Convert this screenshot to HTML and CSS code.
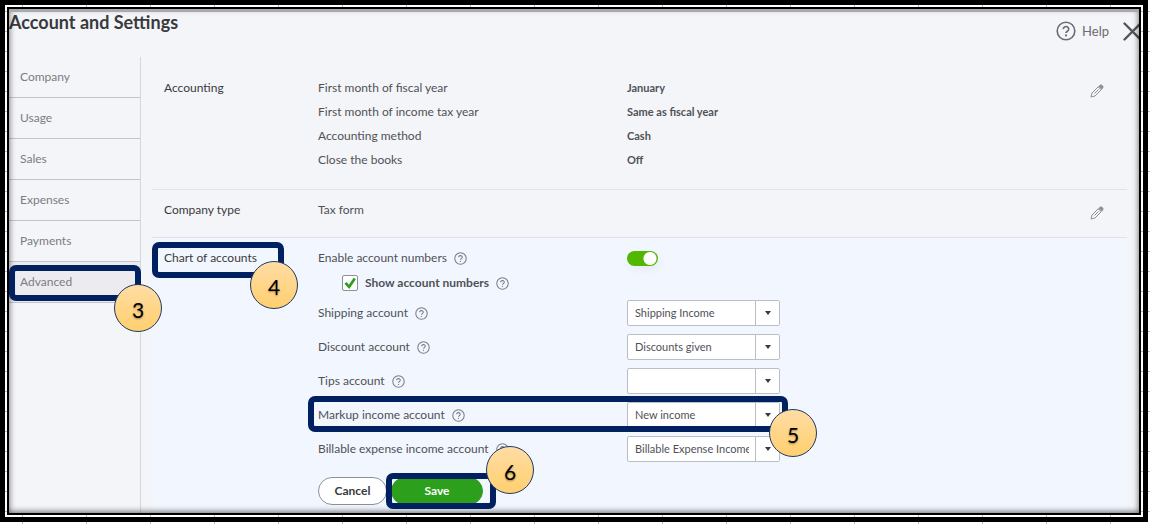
FILE: index.html
```html
<!DOCTYPE html>
<html lang="en">
<head>
<meta charset="utf-8">
<title>Account and Settings</title>
<link rel="stylesheet" href="styles.css">
</head>
<body>
<svg class="defs" aria-hidden="true">
  <symbol id="help" viewBox="0 0 20 20">
    <circle cx="10" cy="10" r="8.8" fill="none" stroke="currentColor" stroke-width="1.6"/>
    <path d="M7.3 8.1a2.7 2.5 0 1 1 4.2 2c-1 .7-1.5 1-1.5 2" fill="none" stroke="currentColor" stroke-width="1.7"/>
    <circle cx="10" cy="14.4" r="1.1" fill="currentColor"/>
  </symbol>
  <symbol id="pencil" viewBox="0 0 14 14">
    <path d="M1 13l1-4 6.2-6.2 3 3L5 12z M4.6 9.4l4-4" fill="none" stroke="currentColor" stroke-width="1" stroke-linejoin="round"/>
    <path d="M8.9 2.4l1.2-1.3a2.2 2.2 0 0 1 2.8 2.8l-1.3 1.2z" fill="currentColor" stroke="currentColor"/>
  </symbol>
</svg>
<div class="frame">
  <div class="window">
    <header class="header">
      <h1 class="title">Account and Settings</h1>
      <div class="tools">
        <button class="help-link" type="button"><svg class="help-icon"><use href="#help"/></svg>Help</button>
        <button class="close" type="button" aria-label="Close"><svg class="close-icon" viewBox="0 0 19 19"><path d="M1.5 1.5l16 16M17.5 1.5l-16 16" stroke="currentColor" stroke-width="2.4" stroke-linecap="round"/></svg></button>
      </div>
    </header>
    <div class="body">
      <nav class="sidebar">
        <a class="tab" href="#company">Company</a>
        <a class="tab" href="#usage">Usage</a>
        <a class="tab" href="#sales">Sales</a>
        <a class="tab" href="#expenses">Expenses</a>
        <a class="tab" href="#payments">Payments</a>
        <a class="tab tab-active" href="#advanced">Advanced<span class="mark mark-tab"><span class="step">3</span></span></a>
      </nav>
      <main class="main">
        <section class="section section-accounting">
          <h2 class="section-title">Accounting</h2>
          <dl class="fields">
            <div class="row"><dt>First month of fiscal year</dt><dd>January</dd></div>
            <div class="row"><dt>First month of income tax year</dt><dd>Same as fiscal year</dd></div>
            <div class="row"><dt>Accounting method</dt><dd>Cash</dd></div>
            <div class="row"><dt>Close the books</dt><dd>Off</dd></div>
          </dl>
          <button class="edit" type="button" aria-label="Edit accounting"><svg class="edit-icon"><use href="#pencil"/></svg></button>
        </section>
        <section class="section">
          <h2 class="section-title">Company type</h2>
          <dl class="fields">
            <div class="row"><dt>Tax form</dt><dd></dd></div>
          </dl>
          <button class="edit" type="button" aria-label="Edit company type"><svg class="edit-icon"><use href="#pencil"/></svg></button>
        </section>
        <section class="section section-chart">
          <h2 class="section-title">Chart of accounts<span class="mark mark-chart"><span class="step">4</span></span></h2>
          <form class="fields">
            <div class="row">
              <span class="name"><label for="enable">Enable account numbers</label><svg class="hint"><use href="#help"/></svg></span>
              <input class="toggle" id="enable" type="checkbox" role="switch" checked>
            </div>
            <div class="row row-check">
              <span class="name"><input class="check" id="show" type="checkbox" checked><label class="strong" for="show">Show account numbers</label><svg class="hint"><use href="#help"/></svg></span>
            </div>
            <div class="row row-select">
              <span class="name"><label for="shipping">Shipping account</label><svg class="hint"><use href="#help"/></svg></span>
              <span class="picker"><select class="select" id="shipping"><option>Shipping Income</option></select></span>
            </div>
            <div class="row row-select">
              <span class="name"><label for="discount">Discount account</label><svg class="hint"><use href="#help"/></svg></span>
              <span class="picker"><select class="select" id="discount"><option>Discounts given</option></select></span>
            </div>
            <div class="row row-select">
              <span class="name"><label for="tips">Tips account</label><svg class="hint"><use href="#help"/></svg></span>
              <span class="picker"><select class="select" id="tips"><option></option></select></span>
            </div>
            <div class="row row-select">
              <span class="name"><label for="markup">Markup income account</label><svg class="hint"><use href="#help"/></svg></span>
              <span class="picker"><select class="select" id="markup"><option>New income</option></select></span>
              <span class="mark mark-row"><span class="step">5</span></span>
            </div>
            <div class="row row-select">
              <span class="name"><label for="billable">Billable expense income account</label><svg class="hint"><use href="#help"/></svg></span>
              <span class="picker"><select class="select" id="billable"><option>Billable Expense Income</option></select></span>
            </div>
            <div class="actions">
              <button class="button" type="button">Cancel</button>
              <div class="save-wrap"><button class="button button-save" type="submit">Save</button><span class="mark mark-save"><span class="step">6</span></span></div>
            </div>
          </form>
        </section>
      </main>
    </div>
  </div>
</div>
</body>
</html>
```
FILE: styles.css
```css
* { box-sizing: border-box; }
body {
  margin: 0;
  font: 12px/24px Lato, "Open Sans", sans-serif;
  color: #505156;
  background:
    repeating-linear-gradient(90deg, transparent 0 22px, #b9b9b9 22px 23px, transparent 23px 64px),
    repeating-linear-gradient(180deg, transparent 0 11px, #b9b9b9 11px 12px, transparent 12px 20px),
    #fff;
}
.defs { position: absolute; width: 0; height: 0; }
button { font: inherit; color: inherit; cursor: pointer; }

.frame {
  margin: 0 2px 2px 0;
  border: 5px solid #000;
  padding: 2px;
}
.window {
  position: relative;
  overflow: hidden;
  border: 2px solid #000;
  background: #f4f5f8;
}
.window::after {
  content: "";
  position: absolute;
  inset: 0;
  pointer-events: none;
  box-shadow: inset 0 3px 0 #a9aaab, inset 0 -1px 6px 0 #000000a0;
}

.header {
  display: flex;
  justify-content: space-between;
  height: 48px;
}
.title { margin: 0; font-size: 18px; line-height: 26px; color: #393a3d; }
.tools { display: flex; align-items: center; gap: 14px; height: 44px; margin-right: -3px; }
.help-link {
  display: flex;
  align-items: center;
  gap: 6px;
  padding: 0;
  border: 0;
  background: none;
  color: #6b6c72;
  font-size: 13px;
}
.help-icon { width: 20px; height: 20px; }
.close { display: flex; padding: 0; border: 0; background: none; color: #55565b; }
.close-icon { width: 19px; height: 19px; }

.body { display: flex; gap: 11px; padding-right: 12px; }
.sidebar { flex: 0 0 132px; border-right: 1px solid #d4d7dc; }
.tab {
  position: relative;
  display: block;
  padding: 0 11px;
  border-bottom: 1px solid #c3c4c8;
  line-height: 40px;
  color: #7b7c81;
  text-decoration: none;
}
.tab-active { background: #ececf0; }

.main { flex: 1; min-width: 0; }
.section {
  display: grid;
  grid-template-columns: 154px 1fr auto;
  padding: 8px 23px 15px 12px;
  border-bottom: 1px solid #dfe3e9;
}
.section-accounting { padding-top: 19px; padding-bottom: 17px; }
.section-chart { padding-bottom: 8px; border: 0; background: #f2f7ff; }
.section-title {
  position: relative;
  margin: 0;
  font-size: 12px;
  font-weight: 400;
  line-height: 24px;
  color: #393a3d;
}
.fields { margin: 0; }
.row {
  position: relative;
  display: grid;
  grid-template-columns: 309px 1fr;
  align-items: center;
  min-height: 24px;
}
.row dd { margin: 0; font-size: 11px; font-weight: 700; }
.row-check { min-height: 26px; padding-left: 24px; }
.row-select { min-height: 34px; }
.name { display: flex; align-items: center; }
.strong { font-weight: 700; }
.hint { width: 13px; height: 13px; margin-left: 7px; color: #7b7c81; }
.edit { align-self: start; display: flex; margin-top: 8px; padding: 0; border: 0; background: none; color: #8d9096; }
.edit-icon { width: 14px; height: 14px; }

.toggle {
  appearance: none;
  width: 31px;
  height: 15px;
  margin: 0;
  border-radius: 8px;
  background: radial-gradient(circle at 23px 50%, #fff 6px, transparent 7px) #53b700;
  box-shadow: 2px 4px 10px #0000000c;
}
.check {
  appearance: none;
  width: 16px;
  height: 16px;
  margin: 0 7px 0 0;
  border: 1px solid #8d9096;
  border-radius: 2px;
  background: #fff;
}
.check:checked::before {
  content: "";
  display: block;
  width: 14px;
  height: 14px;
  background: #2ca01c;
  clip-path: polygon(10% 55%, 27% 43%, 42% 62%, 76% 12%, 92% 24%, 45% 92%);
}

.picker { position: relative; width: 153px; height: 26px; }
.picker::after {
  content: "";
  position: absolute;
  top: 1px;
  right: 1px;
  width: 23px;
  height: 24px;
  border-left: 1px solid #babec5;
  background: #fff;
  pointer-events: none;
}
.picker::before {
  content: "";
  position: absolute;
  z-index: 1;
  top: 11px;
  right: 9px;
  border: 3px solid transparent;
  border-top: 4px solid #393a3d;
  border-bottom: 0;
  pointer-events: none;
}
.select {
  appearance: none;
  display: block;
  width: 100%;
  height: 26px;
  padding: 0 30px 0 7px;
  border: 1px solid #babec5;
  border-radius: 2px;
  background: #fff;
  color: #505156;
  font: 11px/24px Lato, "Open Sans", sans-serif;
  text-overflow: clip;
}

.actions { display: flex; gap: 4px; padding-top: 11px; }
.save-wrap { position: relative; }
.button {
  display: block;
  width: 69px;
  height: 28px;
  padding: 0;
  border: 1px solid #8d9096;
  border-radius: 14px;
  background: #fff;
  color: #393a3d;
  font-weight: 700;
  line-height: 24px;
}
.button-save { width: 92px; border-color: #2ca01c; background: #2ca01c; color: #fff; }

/* Tutorial callouts drawn over the controls */
.mark {
  position: absolute;
  z-index: 2;
  border: 6px solid #002060;
  border-radius: 7px;
  pointer-events: none;
}
.mark-tab { inset: 3px -1px 1px 0; }
.mark-chart { top: -4px; left: -12px; width: 132px; height: 36px; }
.mark-row { top: -2px; left: -10px; width: 480px; height: 36px; }
.mark-save { inset: -4px -13px -4px -5px; }
.step {
  position: absolute;
  width: 48px;
  height: 48px;
  border: 1px solid #1f3864;
  border-radius: 50%;
  background: linear-gradient(#ffdca4, #ffd06f);
  color: #000;
  font: 400 21px/50px Lato, sans-serif;
  text-align: center;
  text-shadow: 0 1px 2px #00000066;
}
.mark-tab .step { top: 13px; right: -27px; }
.mark-chart .step { top: 13px; right: -20px; }
.mark-row .step { top: 7px; right: -35px; }
.mark-save .step { top: -33px; right: -44px; }
```
